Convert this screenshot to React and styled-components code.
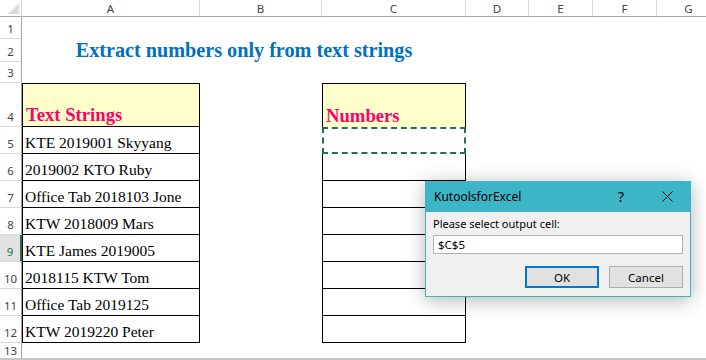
import React from 'react';
import styled, { createGlobalStyle, css } from 'styled-components';

const GlobalStyle = createGlobalStyle`
  html, body {
    margin: 0;
    padding: 0;
    background: #fff;
  }
`;

// column tracks: row header, A, B, C, D, E, F, G
const COLS = '22px 178px 122px 144px 63px 64px 64px 64px';

const Page = styled.div`
  position: relative;
  width: 706px;
  height: 360px;
  overflow: hidden;
  display: flex;
  flex-direction: column;
  background: #fff;
  font-family: 'Liberation Serif', 'Times New Roman', serif;
`;

const Sheet = styled.div`
  flex: 1;
  display: flex;
  flex-direction: column;
  overflow: hidden;
`;

const Row = styled.div`
  display: grid;
  grid-template-columns: ${COLS};
  height: ${(p) => p.$h}px;
  flex: none;
`;

const LastRow = styled(Row)`
  flex: 1;
  height: auto;
`;

const Corner = styled.div`
  box-sizing: border-box;
  border-right: 1px solid #d4d4d4;
  border-bottom: 1px solid #a5a5a5;
  display: flex;
  align-items: flex-end;
  justify-content: flex-end;
  padding: 0 2px 2px 0;
`;

const ColHead = styled.div`
  box-sizing: border-box;
  display: flex;
  align-items: center;
  justify-content: center;
  font-family: 'Noto Sans', 'Open Sans', sans-serif;
  font-size: 11.5px;
  color: #444;
  border-right: 1px solid #d9d9d9;
  border-bottom: 1px solid #a5a5a5;
`;

const RowHead = styled.div`
  box-sizing: border-box;
  display: flex;
  align-items: flex-end;
  justify-content: center;
  padding-bottom: 1px;
  line-height: 16px;
  font-family: 'Noto Sans', 'Open Sans', sans-serif;
  font-size: 11.5px;
  color: #444;
  border-right: 1px solid #a5a5a5;
  border-bottom: 1px solid #dadada;
  ${(p) => p.$active && css`
    background: #e2e2e2;
    color: #217346;
    border-right: 2px solid #217346;
  `}
`;

const Cell = styled.div`
  box-sizing: border-box;
  min-width: 0;
  display: flex;
  align-items: flex-end;
  padding: 0 0 1px 2px;
  white-space: nowrap;
  font-size: 15.5px;
  color: #000;
  background: ${(p) => p.$fill || 'transparent'};
  ${(p) => p.$box && css`
    border-left: 1px solid #000;
    border-right: 1px solid #000;
    border-bottom: 1px solid #000;
  `}
  ${(p) => p.$top && css`border-top: 1px solid #000;`}
  ${(p) => p.$open && css`border-bottom: none;`}
  ${(p) => p.$marquee && css`border: 2px dashed #217346;`}
`;

const Title = styled(Cell)`
  grid-column: span 3;
  justify-content: center;
  overflow: visible;
  padding: 0;
  font-size: 20.2px;
  font-weight: bold;
  color: #0070c0;
`;

const Heading = styled.span`
  font-size: 18.67px;
  font-weight: bold;
  color: #ff0066;
  padding-left: 1px;
  line-height: 1;
`;

const BottomBar = styled.div`
  height: 2px;
  flex: none;
  background: #c6c6c6;
`;

/* dialog */

const Dialog = styled.div`
  position: absolute;
  left: 425px;
  top: 181px;
  width: 266px;
  box-sizing: border-box;
  border: 1px solid #3cb5c6;
  border-top: none;
  background: #f0f0f0;
  box-shadow: 0 3px 18px rgba(0, 0, 0, 0.3);
  font-family: 'Noto Sans', 'Open Sans', sans-serif;
  color: #000;
`;

const TitleBar = styled.div`
  height: 31px;
  display: flex;
  align-items: center;
  background: #3cb5c6;
  padding-left: 8px;
  font-size: 12px;
`;

const TitleText = styled.span`
  flex: 1;
`;

const TitleButton = styled.div`
  width: 46px;
  height: 31px;
  display: flex;
  align-items: center;
  justify-content: center;
  font-size: 14px;
`;

const Body = styled.div`
  padding: 4px 7px 8px;
  display: flex;
  flex-direction: column;
`;

const Label = styled.div`
  font-size: 11px;
  line-height: 16px;
`;

const Input = styled.input`
  margin-top: 3px;
  height: 19px;
  box-sizing: border-box;
  border: 1px solid #b4b4b4;
  background: #fff;
  padding: 0 4px;
  font-family: inherit;
  font-size: 11.5px;
  color: #000;
  outline: none;
`;

const Footer = styled.div`
  margin-top: 12px;
  display: flex;
  justify-content: flex-end;
  gap: 10px;
`;

const Button = styled.div`
  width: 74px;
  height: 22px;
  box-sizing: border-box;
  display: flex;
  align-items: center;
  justify-content: center;
  background: #e1e1e1;
  border: ${(p) => (p.$primary ? '2px solid #0078d7' : '1px solid #adadad')};
  font-size: 11.5px;
`;

const strings = [
  'KTE 2019001 Skyyang',
  '2019002 KTO Ruby',
  'Office Tab 2018103 Jone',
  'KTW 2018009 Mars',
  'KTE James 2019005',
  '2018115 KTW Tom',
  'Office Tab 2019125',
  'KTW 2019220 Peter',
];

const Blanks = ({ n }) => Array.from({ length: n }, (_, i) => <Cell key={i} />);

const App = () => (
  <Page>
    <GlobalStyle />
    <Sheet>
      <Row $h={17}>
        <Corner>
          <svg width="11" height="11" viewBox="0 0 11 11">
            <polygon points="11,0 11,11 0,11" fill="#dcdcdc" />
          </svg>
        </Corner>
        {['A', 'B', 'C', 'D', 'E', 'F', 'G'].map((c) => (
          <ColHead key={c}>{c}</ColHead>
        ))}
      </Row>
      <Row $h={22}>
        <RowHead>1</RowHead>
        <Blanks n={7} />
      </Row>
      <Row $h={22}>
        <RowHead>2</RowHead>
        <Title>Extract numbers only from text strings</Title>
        <Blanks n={4} />
      </Row>
      <Row $h={22}>
        <RowHead>3</RowHead>
        <Blanks n={7} />
      </Row>
      <Row $h={44}>
        <RowHead>4</RowHead>
        <Cell $box $top $fill="#ffffcc"><Heading>Text Strings</Heading></Cell>
        <Cell />
        <Cell $box $top $open $fill="#ffffcc"><Heading>Numbers</Heading></Cell>
        <Blanks n={4} />
      </Row>
      {strings.map((s, i) => (
        <Row $h={27} key={s}>
          <RowHead $active={i === 4}>{i + 5}</RowHead>
          <Cell $box>{s}</Cell>
          <Cell />
          <Cell $box $marquee={i === 0} />
          <Blanks n={4} />
        </Row>
      ))}
      <LastRow>
        <RowHead>13</RowHead>
        <Blanks n={7} />
      </LastRow>
    </Sheet>
    <BottomBar />

    <Dialog>
      <TitleBar>
        <TitleText>KutoolsforExcel</TitleText>
        <TitleButton>?</TitleButton>
        <TitleButton>
          <svg width="11" height="11" viewBox="0 0 11 11">
            <path d="M0.5 0.5 L10.5 10.5 M10.5 0.5 L0.5 10.5" stroke="#000" strokeWidth="1" />
          </svg>
        </TitleButton>
      </TitleBar>
      <Body>
        <Label>Please select output cell:</Label>
        <Input readOnly value="$C$5" />
        <Footer>
          <Button $primary>OK</Button>
          <Button>Cancel</Button>
        </Footer>
      </Body>
    </Dialog>
  </Page>
);

export default App;
